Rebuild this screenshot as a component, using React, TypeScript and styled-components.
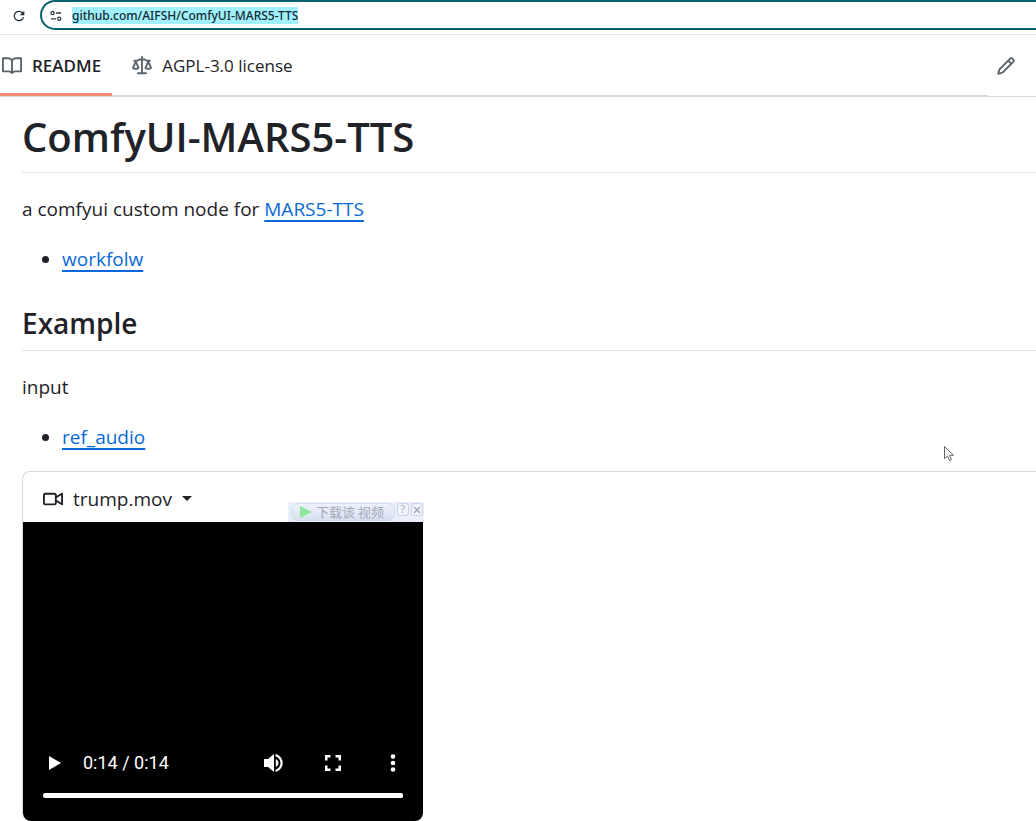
import React from "react";
import styled, { createGlobalStyle } from "styled-components";

const GlobalStyle = createGlobalStyle`
  * { box-sizing: border-box; }
  html { background: #fff; }
  body {
    margin: 0;
    overflow-x: hidden;
    color: #1f2328;
    background: #fff;
    font-family: "Open Sans", "Noto Sans", "Noto Sans CJK SC", sans-serif;
    font-size: 19px;
    line-height: 32px;
  }
  button, input { font: inherit; color: inherit; }
`;

const Page = styled.div`
  position: relative;
`;

const BrowserBar = styled.header`
  display: flex;
  align-items: flex-start;
  height: 35px;
  border-bottom: 1px solid #e3e6ea;
`;

const IconButton = styled.button<{ $size?: number }>`
  display: flex;
  align-items: center;
  justify-content: center;
  flex: none;
  width: ${(p) => p.$size ?? 20}px;
  height: ${(p) => p.$size ?? 20}px;
  padding: 0;
  border: 0;
  background: none;
`;

const ReloadSlot = styled.div`
  display: flex;
  align-items: center;
  flex: none;
  width: 40px;
  height: 32px;
  padding-left: 9px;
`;

const AddressBar = styled.div`
  display: flex;
  flex: 1;
  align-items: center;
  gap: 6px;
  height: 30px;
  padding: 1px 0 0 4px;
  border: 2px solid #086370;
  border-right: 0;
  border-radius: 15px 0 0 15px;
`;

const AddressInput = styled.input`
  field-sizing: content;
  height: 17px;
  padding: 0;
  border: 0;
  outline: 0;
  background: #a0f0ff;
  color: #14292e;
  font-family: "Noto Sans", "Open Sans", sans-serif;
  font-size: 12px;
  font-weight: 500;
  line-height: 17px;
`;

const RepoBar = styled.div`
  display: flex;
  height: 62px;
  border-bottom: 1px solid #d1d9e0;
`;

const Tabs = styled.nav`
  display: flex;
  flex: 1;
  box-shadow: inset 0 -1px #d1d9e0;
`;

const Tab = styled.a<{ $active?: boolean }>`
  display: flex;
  align-items: center;
  gap: 10px;
  padding: 0 11px 0 2px;
  margin-right: 18px;
  color: #1f2328;
  font-size: 17px;
  font-weight: ${(p) => (p.$active ? 600 : 400)};
  text-decoration: none;
  border-bottom: 3px solid ${(p) => (p.$active ? "#fd8c73" : "transparent")};
  border-top: 3px solid transparent;
`;

const EditSlot = styled.div`
  display: flex;
  flex: none;
  align-items: center;
  width: 48px;
  padding-left: 8px;
`;

const Article = styled.main`
  padding: 13px 0 0 22px;
`;

const Title = styled.h1`
  margin: 0 0 20px;
  padding-bottom: 8px;
  border-bottom: 1px solid #dfe4e9;
  font-size: 40px;
  font-weight: 600;
  line-height: 54px;
`;

const Subtitle = styled.h2`
  margin: 28px 0 20px;
  padding-bottom: 7px;
  border-bottom: 1px solid #dfe4e9;
  font-size: 28px;
  font-weight: 600;
  line-height: 40px;
`;

const Paragraph = styled.p`
  margin: 0 0 18px;
`;

const List = styled.ul`
  margin: 0 0 18px;
  padding-left: 40px;
`;

const Link = styled.a`
  color: #0969da;
  text-decoration: underline;
  text-decoration-thickness: 2px;
  text-underline-offset: 4px;
  text-decoration-skip-ink: none;
`;

const MediaBox = styled.section`
  border: 1px solid #d1d9e0;
  border-width: 1px 0 0 1px;
  border-radius: 8px 0 0 8px;
`;

const MediaHeader = styled.div`
  position: relative;
  display: flex;
  align-items: center;
  width: 401px;
  max-width: 100%;
  height: 50px;
  padding: 3px 0 0 20px;
`;

const MediaToggle = styled.button`
  display: flex;
  align-items: center;
  gap: 10px;
  padding: 0;
  border: 0;
  background: none;
`;

const DownloadBar = styled.div`
  position: absolute;
  right: 0;
  bottom: 0;
  display: flex;
  align-items: flex-start;
  gap: 2px;
  height: 20px;
  padding: 1px 1px 1px 3px;
  background: #e9eefa;
`;

const DownloadButton = styled.button`
  display: flex;
  align-items: center;
  gap: 4px;
  width: 104px;
  height: 18px;
  padding: 0 8px;
  border: 1px solid #d3dcea;
  border-radius: 7px;
  background: linear-gradient(#eef2fb, #d7e0f0);
  color: #a3a9b8;
  font-family: "Noto Sans CJK SC", sans-serif;
  font-size: 13px;
  line-height: 16px;
  white-space: nowrap;
`;

const TinyButton = styled.button`
  display: flex;
  align-items: center;
  justify-content: center;
  width: 12px;
  height: 13px;
  padding: 0;
  border: 1px solid #c9d2e2;
  border-radius: 3px;
  background: #f0f3fb;
  color: #a0a7b6;
  font-size: 10px;
  line-height: 11px;
`;

const Player = styled.div`
  display: flex;
  flex-direction: column;
  justify-content: flex-end;
  width: 400px;
  max-width: 100%;
  height: 299px;
  padding: 0 20px 23px;
  border-radius: 0 0 8px 8px;
  background: #000;
  color: #fff;
`;

const Controls = styled.div`
  display: flex;
  align-items: center;
  height: 40px;
  margin-bottom: 10px;
`;

const Time = styled.span`
  flex: 1;
  margin-left: 16px;
  font-family: Roboto, sans-serif;
  font-size: 18px;
`;

const ControlGroup = styled.div`
  display: flex;
  gap: 36px;
  margin-right: -2px;
`;

const Seek = styled.input`
  appearance: none;
  width: 100%;
  height: 5px;
  margin: 0;
  border-radius: 3px;
  background: #fff;
  &::-webkit-slider-thumb {
    appearance: none;
    width: 5px;
    height: 5px;
    border-radius: 3px;
    background: #fff;
  }
`;

const Pointer = styled.svg`
  position: absolute;
  top: 445px;
  right: 81px;
`;

const OctIcon = ({ d, color = "#59636e" }: { d: string; color?: string }) => (
  <svg width="20" height="20" viewBox="0 0 16 16" fill={color} aria-hidden="true">
    <path d={d} />
  </svg>
);

const book =
  "M0 1.75A.75.75 0 0 1 .75 1h4.253c1.227 0 2.317.59 3 1.501A3.743 3.743 0 0 1 11.006 1h4.245a.75.75 0 0 1 .75.75v10.5a.75.75 0 0 1-.75.75h-4.507a2.25 2.25 0 0 0-1.591.659l-.622.621a.75.75 0 0 1-1.06 0l-.622-.621A2.25 2.25 0 0 0 5.258 13H.75a.75.75 0 0 1-.75-.75Zm7.251 10.324.004-5.073-.002-2.253A2.25 2.25 0 0 0 5.003 2.5H1.5v9h3.757a3.75 3.75 0 0 1 1.994.574ZM8.755 4.75l-.004 7.322a3.752 3.752 0 0 1 1.992-.572H14.5v-9h-3.495a2.25 2.25 0 0 0-2.25 2.25Z";
const law =
  "M8.75.75V2h.985c.304 0 .603.08.867.231l1.29.736c.038.022.08.033.124.033h2.234a.75.75 0 0 1 0 1.5h-.427l2.111 4.692a.75.75 0 0 1-.154.838l-.53-.53.529.531-.001.002-.002.002-.006.006-.006.005-.01.01-.045.04c-.21.176-.441.327-.686.45C14.556 10.78 13.88 11 13 11a4.498 4.498 0 0 1-2.023-.454 3.544 3.544 0 0 1-.686-.45l-.045-.04-.016-.015-.006-.006-.004-.004v-.001a.75.75 0 0 1-.154-.838L12.178 4.5h-.162c-.305 0-.604-.079-.868-.231l-1.29-.736a.245.245 0 0 0-.124-.033H8.75V13h2.5a.75.75 0 0 1 0 1.5h-6.5a.75.75 0 0 1 0-1.5h2.5V3.5h-.984a.245.245 0 0 0-.124.033l-1.289.737c-.265.15-.564.23-.869.23h-.162l2.112 4.692a.75.75 0 0 1-.154.838l-.53-.53.529.531-.001.002-.002.002-.006.006-.016.015-.045.04c-.21.176-.441.327-.686.45C4.556 10.78 3.88 11 3 11a4.498 4.498 0 0 1-2.023-.454 3.544 3.544 0 0 1-.686-.45l-.045-.04-.016-.015-.006-.006-.004-.004v-.001a.75.75 0 0 1-.154-.838L2.178 4.5H1.75a.75.75 0 0 1 0-1.5h2.234a.249.249 0 0 0 .125-.033l1.288-.737c.265-.15.564-.23.869-.23h.984V.75a.75.75 0 0 1 1.5 0Zm2.945 8.477c.285.135.718.273 1.305.273s1.02-.138 1.305-.273L13 6.327Zm-10 0c.285.135.718.273 1.305.273s1.02-.138 1.305-.273L3 6.327Z";
const pencil =
  "M11.013 1.427a1.75 1.75 0 0 1 2.474 0l1.086 1.086a1.75 1.75 0 0 1 0 2.474l-8.61 8.61c-.21.21-.47.364-.756.445l-3.251.93a.75.75 0 0 1-.927-.928l.929-3.25c.081-.286.235-.547.445-.758l8.61-8.61Zm.176 4.823L9.75 4.81l-6.286 6.287a.253.253 0 0 0-.064.108l-.558 1.953 1.953-.558a.253.253 0 0 0 .108-.064Zm1.238-3.763a.25.25 0 0 0-.354 0L10.811 3.75l1.439 1.44 1.263-1.263a.25.25 0 0 0 0-.354Z";
const camera =
  "M16 3.75v8.5a.75.75 0 0 1-1.136.643L11 10.575v.675A1.75 1.75 0 0 1 9.25 13h-7.5A1.75 1.75 0 0 1 0 11.25v-6.5C0 3.784.784 3 1.75 3h7.5c.966 0 1.75.784 1.75 1.75v.675l3.864-2.318A.75.75 0 0 1 16 3.75Zm-6.5 1a.25.25 0 0 0-.25-.25h-7.5a.25.25 0 0 0-.25.25v6.5c0 .138.112.25.25.25h7.5a.25.25 0 0 0 .25-.25v-6.5ZM11 8.825l3.5 2.1v-5.85l-3.5 2.1Z";

const PlayerIcon = ({ d }: { d: string }) => (
  <svg width="24" height="24" viewBox="0 0 24 24" fill="#fff" aria-hidden="true">
    <path d={d} />
  </svg>
);

export default function App() {
  return (
    <Page>
      <GlobalStyle />
      <BrowserBar>
        <ReloadSlot>
          <IconButton aria-label="Reload">
            <svg width="16" height="16" viewBox="0 0 24 24" fill="#27313a">
              <path d="M17.65 6.35A7.96 7.96 0 0 0 12 4a8 8 0 1 0 7.73 10h-2.08A6 6 0 1 1 12 6c1.66 0 3.14.69 4.22 1.78L13 11h7V4z" />
            </svg>
          </IconButton>
        </ReloadSlot>
        <AddressBar>
          <IconButton aria-label="Site information">
            <svg width="12" height="12" viewBox="0 0 12 12" fill="none" stroke="#2b3a42" strokeWidth="1.3">
              <circle cx="2.5" cy="3" r="1.6" />
              <path d="M6 3h5M1 8.8h5" />
              <circle cx="9.2" cy="8.8" r="1.6" />
            </svg>
          </IconButton>
          <AddressInput aria-label="Address" defaultValue="github.com/AIFSH/ComfyUI-MARS5-TTS" spellCheck={false} />
        </AddressBar>
      </BrowserBar>

      <RepoBar>
        <Tabs>
          <Tab href="#readme" $active>
            <OctIcon d={book} />
            README
          </Tab>
          <Tab href="#license">
            <OctIcon d={law} />
            AGPL-3.0 license
          </Tab>
        </Tabs>
        <EditSlot>
          <IconButton aria-label="Edit file">
            <OctIcon d={pencil} />
          </IconButton>
        </EditSlot>
      </RepoBar>

      <Article>
        <Title>ComfyUI-MARS5-TTS</Title>
        <Paragraph>
          a comfyui custom node for <Link href="#mars5">MARS5-TTS</Link>
        </Paragraph>
        <List>
          <li>
            <Link href="#workflow">workfolw</Link>
          </li>
        </List>
        <Subtitle>Example</Subtitle>
        <Paragraph>input</Paragraph>
        <List>
          <li>
            <Link href="#ref-audio">ref_audio</Link>
          </li>
        </List>

        <MediaBox>
          <MediaHeader>
            <MediaToggle>
              <OctIcon d={camera} color="#1f2328" />
              trump.mov
              <svg width="10" height="5" viewBox="0 0 10 5" fill="#1f2328" aria-hidden="true">
                <path d="M0 0h10L5 5z" />
              </svg>
            </MediaToggle>
            <DownloadBar>
              <DownloadButton>
                <svg width="12" height="12" viewBox="0 0 12 12" fill="#8fe79c" aria-hidden="true">
                  <path d="M0 0l12 6-12 6z" />
                </svg>
                下载该 视频
              </DownloadButton>
              <TinyButton>?</TinyButton>
              <TinyButton aria-label="Close">
                <svg width="8" height="8" viewBox="0 0 8 8" stroke="#a0a7b6" strokeWidth="1.4">
                  <path d="M1 1l6 6M7 1L1 7" />
                </svg>
              </TinyButton>
            </DownloadBar>
          </MediaHeader>
          <Player>
            <Controls>
              <IconButton $size={24} aria-label="Play">
                <PlayerIcon d="M6 5v14l12-7z" />
              </IconButton>
              <Time>0:14 / 0:14</Time>
              <ControlGroup>
                <IconButton $size={24} aria-label="Mute">
                  <PlayerIcon d="M3 8v8h4l6 5V3L7 8H3zm14.500 4c0-1.770-1.020-3.290-2.700-4.030v8.050c1.680-.730 2.700-2.250 2.700-4.020zM14.500 3v2.200c2.890.860 5 3.540 5 6.800s-2.110 5.940-5 6.800V21c4.010-.910 7.200-4.700 7.200-9s-3.190-8.090-7.200-9z" />
                </IconButton>
                <IconButton $size={24} aria-label="Full screen">
                  <PlayerIcon d="M6.500 14.500h-2.500V20h5.500v-2.500h-3zm-2.500-5h2.500v-3h3V4H4zm13.500 8h-3V20H20v-5.500h-2.500zM14.500 4v2.500h3v3H20V4z" />
                </IconButton>
                <IconButton $size={24} aria-label="More options">
                  <svg width="24" height="24" viewBox="0 0 24 24" fill="#fff">
                    <circle cx="12" cy="5.500" r="2.300" />
                    <circle cx="12" cy="12" r="2.300" />
                    <circle cx="12" cy="18.500" r="2.300" />
                  </svg>
                </IconButton>
              </ControlGroup>
            </Controls>
            <Seek type="range" aria-label="Seek" min={0} max={14} defaultValue={14} />
          </Player>
        </MediaBox>
      </Article>

      <Pointer width="12" height="18" viewBox="0 0 12 18" fill="#fff" stroke="#63636b" strokeWidth="1" aria-hidden="true">
        <path d="M1.500 1.500v12l3-2.500 2 4.500 2-1-2-4.200h4z" />
      </Pointer>
    </Page>
  );
}
